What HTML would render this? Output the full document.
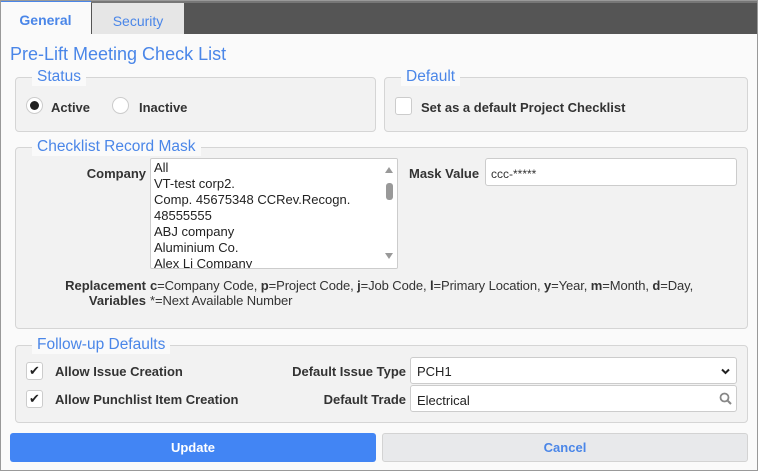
<!DOCTYPE html>
<html><head><style>
*{box-sizing:border-box;margin:0;padding:0}
body{width:758px;height:471px;background:#fafafa;font-family:"Liberation Sans",sans-serif;font-size:13px;color:#333;position:relative;overflow:hidden}
.frame{position:absolute;left:0;top:0;width:758px;height:471px;border:1px solid #999;pointer-events:none}
.abs{position:absolute}
.fs{position:absolute;border:1px solid #d5d5d5;border-radius:4px;background:#f2f2f2}
.lg{position:absolute;top:-10px;left:16px;background:#fafafa;padding:0 5px;color:#4a86e8;font-size:15.5px;line-height:18px}
.b{font-weight:bold}
.box{position:absolute;background:#fff;border:1px solid #ccc;border-radius:3px}
.chk{position:absolute;width:17px;height:18px;background:#fff;border:1px solid #ccc;border-radius:3px;font-size:13px;line-height:16px;text-align:center;color:#222}
</style></head><body>
<div class="abs" style="left:91px;top:0;width:667px;height:34px;background:#555"></div>
<div class="abs" style="left:91px;top:0;width:667px;height:3px;background:#777"></div>
<div class="abs" style="left:0;top:0;width:91px;height:35px;background:#fafafa;border-top:2px solid #4a86e8"></div>
<div class="abs b" style="left:0;top:12px;width:91px;text-align:center;color:#4a86e8;font-size:14px">General</div>
<div class="abs" style="left:92px;top:3px;width:92px;height:31px;background:#e6e6e6;color:#4a86e8;font-size:14px;text-align:center;line-height:36px">Security</div>
<div class="abs" style="left:10px;top:44px;color:#4a86e8;font-size:18px">Pre-Lift Meeting Check List</div>

<div class="fs" style="left:15px;top:77px;width:361px;height:55px"><div class="lg">Status</div></div>
<div class="abs" style="left:26px;top:97px;width:17px;height:17px;border:1px solid #ccc;border-radius:50%;background:#fff"><div style="position:absolute;left:3px;top:3px;width:9px;height:9px;border-radius:50%;background:#222"></div></div>
<div class="abs b" style="left:51px;top:100px">Active</div>
<div class="abs" style="left:112px;top:97px;width:17px;height:17px;border:1px solid #ccc;border-radius:50%;background:#fff"></div>
<div class="abs b" style="left:139px;top:100px">Inactive</div>

<div class="fs" style="left:384px;top:77px;width:364px;height:55px"><div class="lg">Default</div></div>
<div class="chk" style="left:395px;top:97px"></div>
<div class="abs b" style="left:421px;top:100px">Set as a default Project Checklist</div>

<div class="fs" style="left:15px;top:147px;width:733px;height:182px"><div class="lg">Checklist Record Mask</div></div>
<div class="abs b" style="left:40px;top:166px;width:106px;text-align:right">Company</div>
<div class="box" style="left:150px;top:158px;width:248px;height:111px;overflow:hidden;border-radius:2px">
<div style="padding:1px 3px;line-height:16px;font-size:13px;color:#222">All<br>VT-test corp2.<br>Comp. 45675348 CCRev.Recogn.<br>48555555<br>ABJ company<br>Aluminium Co.<br>Alex Li Company</div>
<div style="position:absolute;right:0;top:0;width:14px;height:111px;background:#fff"></div>
<div style="position:absolute;right:4px;top:8px;width:0;height:0;border-left:4px solid transparent;border-right:4px solid transparent;border-bottom:6px solid #999"></div>
<div style="position:absolute;right:4px;top:24px;width:7px;height:17px;background:#999;border-radius:3px"></div>
<div style="position:absolute;right:4px;top:94px;width:0;height:0;border-left:4px solid transparent;border-right:4px solid transparent;border-top:6px solid #999"></div>
</div>
<div class="abs b" style="left:409px;top:166px">Mask Value</div>
<div class="box" style="left:485px;top:158px;width:252px;height:28px;padding:8px 5px;font-size:12px">ccc-*****</div>
<div class="abs b" style="left:40px;top:278px;width:106px;text-align:right;line-height:15px">Replacement<br>Variables</div>
<div class="abs" style="left:150px;top:278px;line-height:15px;font-size:13px;letter-spacing:-0.1px"><b>c</b>=Company Code, <b>p</b>=Project Code, <b>j</b>=Job Code, <b>l</b>=Primary Location, <b>y</b>=Year, <b>m</b>=Month, <b>d</b>=Day,<br>*=Next Available Number</div>

<div class="fs" style="left:15px;top:345px;width:733px;height:78px"><div class="lg">Follow-up Defaults</div></div>
<div class="chk" style="left:26px;top:362px">✔</div>
<div class="abs b" style="left:55px;top:364px">Allow Issue Creation</div>
<div class="chk" style="left:26px;top:390px">✔</div>
<div class="abs b" style="left:55px;top:392px">Allow Punchlist Item Creation</div>
<div class="abs b" style="left:260px;top:364px;width:146px;text-align:right">Default Issue Type</div>
<div class="abs b" style="left:260px;top:392px;width:146px;text-align:right">Default Trade</div>
<div class="box" style="left:410px;top:357px;width:327px;height:27px;padding:6px 6px;color:#222">PCH1
<svg style="position:absolute;right:6px;top:10px" width="9" height="7" viewBox="0 0 9 7"><path d="M1 1.5L4.5 5L8 1.5" fill="none" stroke="#222" stroke-width="2"/></svg></div>
<div class="box" style="left:410px;top:385px;width:327px;height:27px;padding:7px 6px;color:#222">Electrical
<svg style="position:absolute;right:4px;top:6px" width="13" height="13" viewBox="0 0 13 13"><circle cx="5.5" cy="5.5" r="4" fill="none" stroke="#888" stroke-width="1.8"/><path d="M8.5 8.5L12 12" stroke="#888" stroke-width="2"/></svg></div>

<div class="abs b" style="left:10px;top:433px;width:366px;height:29px;background:#4285f4;color:#fff;border-radius:3px;text-align:center;line-height:29px">Update</div>
<div class="abs b" style="left:382px;top:433px;width:366px;height:29px;background:#e8e9eb;color:#4a86e8;border:1px solid #d3d3d3;border-radius:3px;text-align:center;line-height:27px">Cancel</div>
<div class="frame"></div>
</body></html>
